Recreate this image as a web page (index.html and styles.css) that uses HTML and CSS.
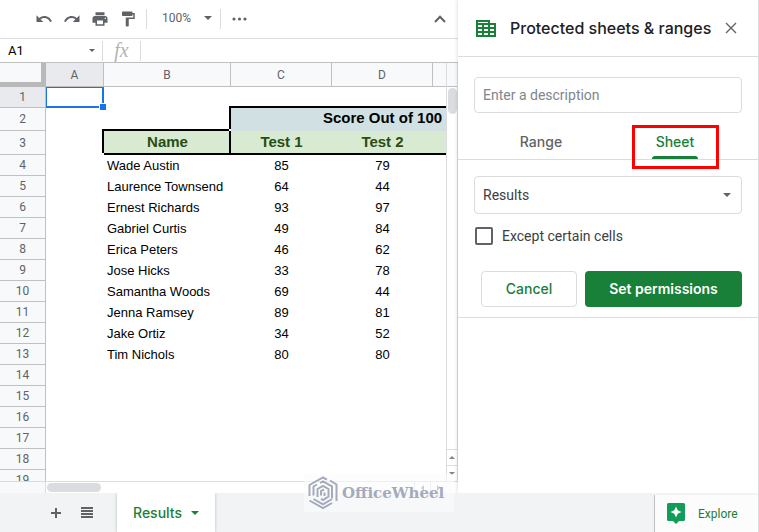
FILE: index.html
```html
<!DOCTYPE html>
<html lang="en">
<head>
<meta charset="utf-8">
<title>Protected sheets &amp; ranges</title>
<link rel="stylesheet" href="styles.css">
</head>
<body>
<div class="app">
  <div class="workspace">
    <main class="sheet">
      <div class="toolbar">
        <button class="tool" aria-label="Undo"><svg viewBox="0 0 24 24"><path d="M12.5 8c-2.65 0-5.05.99-6.9 2.6L2 7v9h9l-3.62-3.62c1.39-1.16 3.16-1.88 5.12-1.88 3.54 0 6.55 2.31 7.6 5.5l2.37-.78C21.08 11.03 17.15 8 12.5 8z"/></svg></button>
        <button class="tool" aria-label="Redo"><svg viewBox="0 0 24 24"><path d="M18.4 10.6C16.55 8.99 14.15 8 11.5 8c-4.65 0-8.58 3.03-9.96 7.22L3.9 16c1.05-3.19 4.05-5.5 7.6-5.5 1.95 0 3.73.72 5.12 1.88L13 16h9V7l-3.6 3.6z"/></svg></button>
        <button class="tool" aria-label="Print"><svg viewBox="0 0 24 24"><path d="M19 8H5c-1.66 0-3 1.34-3 3v6h4v4h12v-4h4v-6c0-1.66-1.34-3-3-3zm-3 11H8v-5h8v5zm3-7c-.55 0-1-.45-1-1s.45-1 1-1 1 .45 1 1-.45 1-1 1zm-1-9H6v4h12V3z"/></svg></button>
        <button class="tool" aria-label="Paint format"><svg viewBox="0 0 24 24"><path d="M18 4V3c0-.55-.45-1-1-1H5c-.55 0-1 .45-1 1v4c0 .55.45 1 1 1h12c.55 0 1-.45 1-1V6h1v4H9v11c0 .55.45 1 1 1h2c.55 0 1-.45 1-1v-9h8V4h-3z"/></svg></button>
        <span class="divider"></span>
        <button class="zoom-level">100%<span class="caret"></span></button>
        <span class="divider"></span>
        <button class="tool more" aria-label="More"><svg viewBox="0 0 18 18"><circle cx="4" cy="9" r="1.6"/><circle cx="9.500" cy="9" r="1.6"/><circle cx="15" cy="9" r="1.6"/></svg></button>
        <button class="tool collapse" aria-label="Hide the menus"><svg viewBox="0 0 18 18"><path d="M4 12l5-5.200 5 5.200" fill="none" stroke="currentColor" stroke-width="2"/></svg></button>
      </div>
      <div class="formula-bar">
        <input class="name-box" type="text" value="A1" aria-label="Name box">
        <span class="caret small"></span>
        <span class="divider name-divider"></span>
        <span class="fx">fx</span>
        <span class="divider"></span>
        <input class="formula" type="text" aria-label="Formula">
      </div>
      <div class="grid-area">
        <div class="grid">
          <table>
            <colgroup><col class="c-num"><col class="c-a"><col class="c-b"><col class="c-val"><col class="c-val"><col class="c-val"></colgroup>
            <thead><tr><td class="corner"></td><th class="on">A</th><th>B</th><th>C</th><th>D</th><th></th></tr></thead>
            <tbody>
              <tr><th class="on">1</th><td class="selected"></td><td></td><td></td><td></td><td></td></tr>
              <tr class="r2"><th>2</th><td></td><td></td><td class="score" colspan="3">Score Out of 100</td></tr>
              <tr class="r3"><th>3</th><td></td><td class="head name">Name</td><td class="head first">Test 1</td><td class="head">Test 2</td><td class="head"></td></tr>
              <tr><th>4</th><td></td><td>Wade Austin</td><td class="n">85</td><td class="n">79</td><td></td></tr>
              <tr><th>5</th><td></td><td>Laurence Townsend</td><td class="n">64</td><td class="n">44</td><td></td></tr>
              <tr><th>6</th><td></td><td>Ernest Richards</td><td class="n">93</td><td class="n">97</td><td></td></tr>
              <tr><th>7</th><td></td><td>Gabriel Curtis</td><td class="n">49</td><td class="n">84</td><td></td></tr>
              <tr><th>8</th><td></td><td>Erica Peters</td><td class="n">46</td><td class="n">62</td><td></td></tr>
              <tr><th>9</th><td></td><td>Jose Hicks</td><td class="n">33</td><td class="n">78</td><td></td></tr>
              <tr><th>10</th><td></td><td>Samantha Woods</td><td class="n">69</td><td class="n">44</td><td></td></tr>
              <tr><th>11</th><td></td><td>Jenna Ramsey</td><td class="n">89</td><td class="n">81</td><td></td></tr>
              <tr><th>12</th><td></td><td>Jake Ortiz</td><td class="n">34</td><td class="n">52</td><td></td></tr>
              <tr><th>13</th><td></td><td>Tim Nichols</td><td class="n">80</td><td class="n">80</td><td></td></tr>
              <tr><th>14</th><td colspan="5"></td></tr>
              <tr><th>15</th><td colspan="5"></td></tr>
              <tr><th>16</th><td colspan="5"></td></tr>
              <tr><th>17</th><td colspan="5"></td></tr>
              <tr><th>18</th><td colspan="5"></td></tr>
              <tr><th>19</th><td colspan="5"></td></tr>
            </tbody>
          </table>
        </div>
        <div class="vscroll">
          <div class="vhead"></div>
          <div class="vthumb"></div>
          <button class="arrow up" aria-label="Scroll up"></button>
          <button class="arrow down" aria-label="Scroll down"></button>
        </div>
      </div>
      <div class="hscroll">
        <div class="hcorner"></div>
        <div class="hthumb"></div>
        <button class="arrow left" aria-label="Scroll left"></button>
        <button class="arrow right" aria-label="Scroll right"></button>
      </div>
    </main>
    <aside class="panel">
      <header class="panel-head">
        <svg class="sheet-icon" viewBox="0 0 20 17"><path fill="#188038" d="M0 0h14v3h6v14H0z"/><path fill="#fff" d="M2 2h10v1H2zM2 5h4v2H2zM8 5h4v2H8zM14 5h4v2h-4zM2 9h4v2H2zM8 9h4v2H8zM14 9h4v2h-4zM2 13h4v2H2zM8 13h4v2H8zM14 13h4v2h-4z"/></svg>
        <h1>Protected sheets &amp; ranges</h1>
        <button class="close" aria-label="Close"><svg viewBox="0 0 12 12"><path d="M1 1l10 10M11 1L1 11" stroke="currentColor" stroke-width="1.400"/></svg></button>
      </header>
      <form class="panel-body">
        <input class="field" type="text" placeholder="Enter a description" aria-label="Description">
        <div class="tabs">
          <button type="button" class="tab">Range</button>
          <button type="button" class="tab active">Sheet<span class="marker"></span></button>
        </div>
        <div class="select-wrap">
          <select class="field" aria-label="Sheet"><option>Results</option></select>
          <span class="caret"></span>
        </div>
        <label class="check"><input type="checkbox">Except certain cells</label>
        <div class="actions">
          <button type="button" class="btn cancel">Cancel</button>
          <button type="button" class="btn primary">Set permissions</button>
        </div>
      </form>
    </aside>
  </div>
  <footer class="bottom-bar">
    <button class="tool" aria-label="Add sheet"><svg viewBox="0 0 18 18"><path d="M8 4h2v4h4v2h-4v4H8v-4H4V8h4z"/></svg></button>
    <button class="tool" aria-label="All sheets"><svg viewBox="0 0 18 18"><path d="M3 3h12v2H3zM3 6h12v2H3zM3 9h12v2H3zM3 12h12v2H3z"/></svg></button>
    <button class="sheet-tab">Results<span class="caret"></span></button>
    <button class="explore"><svg viewBox="0 0 18 21"><path fill="#0f9d58" d="M1.500 0h15A1.500 1.500 0 0 1 18 1.500v15a1.500 1.500 0 0 1-1.500 1.500H12l-3 3-3-3H1.500A1.500 1.500 0 0 1 0 16.500v-15A1.500 1.500 0 0 1 1.500 0z"/><path fill="#fff" d="M9 3.500l1.700 3.800L14.500 9l-3.800 1.700L9 14.500l-1.700-3.800L3.500 9l3.800-1.700z"/></svg>Explore</button>
  </footer>
  <div class="watermark">
    <svg viewBox="0 0 30 34" fill="none" stroke="currentColor" stroke-width="2"><path d="M1.500 20V9L15 1.500l4 2.200M12 7l3-1.700 9 5v12M22 4.500l6.500 4V25M1.500 24.500L15 32l9-5M5.500 19.500v-9L9 8.500M5.500 23l9.500 5.300 9-5.300M9.500 21v-8l5.500-3.200 5.500 3.200v7.500L15 24l-2-1.200M13 19.500V15l3-1.500M16.500 20v-3.500"/></svg>
    <span>OfficeWheel</span>
  </div>
</div>
</body>
</html>
```
FILE: styles.css
```css
* { box-sizing: border-box; }
body { margin: 0; font-family: Roboto, sans-serif; color: #202124; background: #fff; }
button, input, select { font: inherit; color: inherit; margin: 0; padding: 0; border: 0; background: none; outline: 0; }
svg { display: block; }

.app { position: relative; display: flex; flex-direction: column; height: 100vh; overflow: hidden; border-right: 1px solid #dadce0; }
.workspace { flex: 1; min-height: 0; display: flex; }
.sheet { flex: 1; min-width: 0; display: flex; flex-direction: column; }

.tool { width: 28px; height: 28px; display: flex; align-items: center; justify-content: center; color: #5f6368; }
.tool svg { width: 18px; height: 18px; fill: currentColor; }
.divider { width: 1px; height: 20px; background: #dadce0; }
.caret { border: 4px solid transparent; border-top-color: #5f6368; border-bottom: 0; }
.caret.small { border-width: 3px 3px 0; }

.toolbar { display: flex; align-items: center; height: 39px; padding: 0 4px 0 30px; border-bottom: 1px solid #dadce0; }
.toolbar .divider { margin-left: 4px; }
.zoom-level { display: flex; align-items: center; gap: 13px; padding: 0 4px 2px 15px; font-size: 12px; color: #5f6368; }
.more { margin-left: 4px; }
.collapse { margin-left: auto; }

.formula-bar { display: flex; align-items: center; height: 24px; border-bottom: 1px solid #c0c0c0; }
.name-box { width: 89px; padding-left: 8px; font-size: 13px; color: #000; }
.name-divider { margin-left: 7px; }
.fx { width: 37px; text-align: center; font: italic 20px "Liberation Serif", serif; color: #b4b4b4; }
.formula { flex: 1; min-width: 0; }

.grid-area { flex: 1; min-height: 0; display: flex; border-bottom: 1px solid #dadce0; }
.grid { flex: 1; min-width: 0; overflow: hidden; }
table { table-layout: fixed; width: 534px; border-collapse: separate; border-spacing: 0; }
.c-num { width: 46px; }
.c-a { width: 58px; }
.c-b { width: 127px; }
.c-val { width: 101px; }
tr { height: 21px; }
thead tr { height: 24px; }
.r2 { height: 23px; }
.r3 { height: 24px; }
th { padding: 0; font-size: 12px; line-height: 14px; font-weight: 400; color: #5f6368; background: #f8f9fa; border: solid #c0c0c0; border-width: 0 1px 1px 0; }
th.on { background: #e8eaed; }
td { padding: 0 3px; font: 13px/16px "Liberation Sans", sans-serif; color: #000; white-space: nowrap; }
.corner { background: #f8f9fa; border: solid #b9b9b9; border-width: 0 5px 5px 0; }
.selected { position: relative; border: solid #1a73e8; border-width: 1px 2px 2px 1px; }
.selected::after { content: ""; position: absolute; right: -4px; bottom: -4px; width: 6px; height: 6px; background: #1a73e8; box-shadow: 0 0 0 1px #fff; }
.n { text-align: center; }
.score, .head { padding: 0 3px 1px; font-size: 15px; font-weight: 700; text-align: center; }
.score { padding-bottom: 3px; background: #d0e0e3; box-shadow: -2px -2px 0 #000; }
.head { color: #274e13; background: #d9ead3; border-bottom: 2px solid #000; }
.head.name, .head.first { box-shadow: -2px -2px 0 #000; }
.head.first { box-shadow: -2px 0 0 #000; }

.vscroll { width: 12px; display: flex; flex-direction: column; border: solid #dadce0; border-width: 0 1px; }
.vhead { height: 24px; background: #f8f9fa; border-bottom: 1px solid #c0c0c0; }
.vthumb { height: 26px; margin: 1px 0 auto 1px; width: 9px; border-radius: 5px; background: #dadce0; }
.arrow { display: flex; align-items: center; justify-content: center; width: 16px; height: 11px; border-left: 1px solid #dadce0; }
.arrow::after { content: ""; border: 3px solid transparent; }
.vscroll .arrow { width: 10px; height: 16px; border: 0; border-top: 1px solid #dadce0; }
.up::after { border-top: 0; border-bottom-color: #80868b; }
.down::after { border-bottom: 0; border-top-color: #80868b; }
.left::after { border-left: 0; border-right-color: #80868b; }
.right::after { border-right: 0; border-left-color: #80868b; }
.hscroll { display: flex; align-items: center; height: 11px; padding-right: 12px; }
.hcorner { width: 46px; height: 11px; background: #f8f9fa; border-right: 1px solid #dadce0; }
.hthumb { width: 54px; height: 9px; margin: 0 auto 0 1px; border-radius: 5px; background: #dadce0; }

.panel { width: 300px; background: #fff; box-shadow: -1px 0 3px rgba(60, 64, 67, .15); }
.panel-head { display: flex; align-items: center; height: 57px; padding: 0 21px 0 18px; border-bottom: 1px solid #dadce0; }
.sheet-icon { width: 20px; height: 17px; }
h1 { flex: 1; margin: 0 0 0 14px; font: 500 16px/24px Inter, sans-serif; white-space: nowrap; }
.close { color: #5f6368; }
.close svg { width: 12px; height: 12px; }
.panel-body { padding-top: 20px; border-bottom: 1px solid #dadce0; }
.field { display: block; width: 268px; height: 36px; margin: 0 16px; padding: 0 8px; font-size: 14px; color: #3c4043; border: 1px solid #dadce0; border-radius: 4px; }
.field::placeholder { color: #80868b; opacity: 1; }
.tabs { display: flex; margin-top: 12px; padding: 0 16px; border-bottom: 1px solid #dadce0; }
.tab { position: relative; flex: 1; height: 34px; font: 500 14px/20px Inter, sans-serif; color: #5f6368; }
.tab.active { color: #188038; }
.marker { position: absolute; left: 44px; right: 44px; bottom: 0; height: 3px; border-radius: 3px 3px 0 0; background: #188038; }
.tab.active::after { content: ""; position: absolute; inset: 0 23px -10px 24px; border: 3px solid #f00; }
.select-wrap { position: relative; margin-top: 16px; }
.select-wrap .field { height: 38px; appearance: none; }
.select-wrap .caret { position: absolute; right: 27px; top: 17px; }
.check { display: flex; align-items: center; gap: 9px; margin: 12px 17px 0; height: 20px; font-size: 14px; color: #3c4043; }
.check input { appearance: none; width: 18px; height: 18px; border: 2px solid #5f6368; border-radius: 2px; }
.actions { display: flex; justify-content: flex-end; gap: 8px; padding: 25px 16px 10px; }
.btn { height: 36px; border-radius: 4px; font: 500 14px/20px Inter, sans-serif; }
.cancel { width: 96px; color: #188038; border: 1px solid #dadce0; }
.primary { width: 157px; color: #fff; background: #188038; font-weight: 600; }

.bottom-bar { display: flex; align-items: center; height: 39px; padding-left: 40px; background: #f1f3f4; }
.bottom-bar .tool { width: 31px; }
.sheet-tab { display: flex; align-items: center; gap: 9px; align-self: stretch; margin-left: 15px; padding: 0 16px; font: 500 14px/20px Inter, sans-serif; color: #188038; background: #fff; box-shadow: 0 0 3px rgba(60, 64, 67, .3); clip-path: inset(0 -3px); }
.sheet-tab .caret { border-top-color: #188038; }
.explore { display: flex; align-items: center; gap: 13px; width: 104px; align-self: stretch; margin: 2px 0 0 auto; padding-left: 12px; font-size: 12px; color: #188038; background: #fcfcfc; border-left: 1px solid #c0c0c0; }
.explore svg { width: 18px; height: 21px; }

.watermark { position: absolute; left: 304px; bottom: 20px; display: flex; align-items: center; gap: 4px; width: 150px; height: 38px; padding-left: 4px; color: #a3abbb; background: rgba(252, 252, 253, .6); font: 700 15px/20px "DejaVu Serif", serif; }
.watermark svg { width: 30px; height: 34px; }
```
